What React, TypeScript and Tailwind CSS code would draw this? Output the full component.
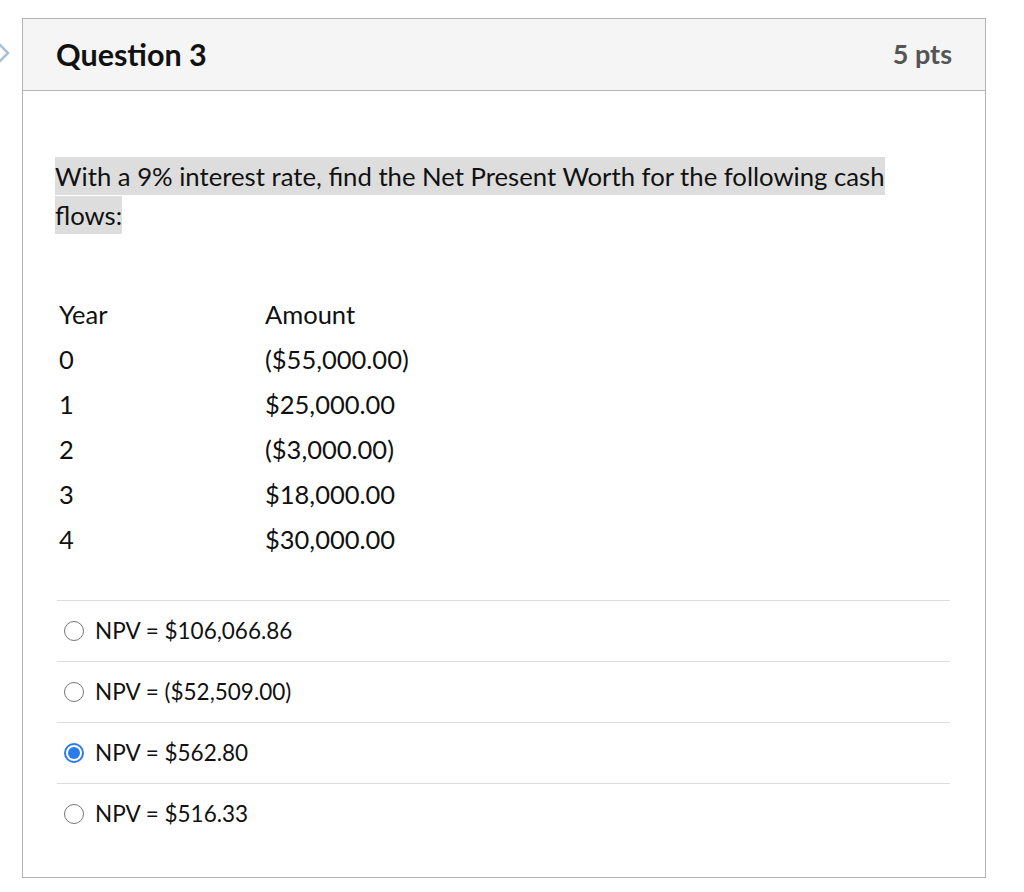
import React from 'react';

const rows = [
  { year: '0', amount: '($55,000.00)' },
  { year: '1', amount: '$25,000.00' },
  { year: '2', amount: '($3,000.00)' },
  { year: '3', amount: '$18,000.00' },
  { year: '4', amount: '$30,000.00' },
];

const answers = [
  { text: 'NPV = $106,066.86', checked: false },
  { text: 'NPV = ($52,509.00)', checked: false },
  { text: 'NPV = $562.80', checked: true },
  { text: 'NPV = $516.33', checked: false },
];

function Radio({ checked }: { checked: boolean }) {
  if (checked) {
    return (
      <span className="flex h-[20px] w-[20px] shrink-0 items-center justify-center rounded-full border-2 border-[#2b7bec] bg-white">
        <span className="h-[12px] w-[12px] rounded-full bg-[#2b7bec]" />
      </span>
    );
  }
  return <span className="h-[20px] w-[20px] shrink-0 rounded-full border border-[#767676] bg-white" />;
}

export default function App() {
  return (
    <div className="relative h-[892px] w-[1024px] bg-white pl-[22px] pt-[18px] font-['Lato',sans-serif] text-[#111]">
      {/* collapsed nav arrow peeking from the left edge */}
      <svg className="absolute left-0 top-[42px]" width="10" height="22" viewBox="0 0 10 22">
        <path d="M-2 1 L8 11 L-2 21" fill="none" stroke="#a8c0d4" strokeWidth="2.5" />
      </svg>

      <div className="h-[860px] w-[964px] border border-[#b5b5b5]">
        {/* Header */}
        <div className="flex h-[72px] items-center justify-between border-b border-[#b5b5b5] bg-[#f5f5f5] pl-[33px] pr-[33px]">
          <h2 className="text-[30.5px] font-bold">Question 3</h2>
          <span className="text-[27px] font-bold text-[#555]">5 pts</span>
        </div>

        {/* Body */}
        <div className="px-[32px] pt-[66px]">
          <p className="w-[860px] text-[25.7px] leading-[38.5px]">
            <span className="bg-[#dddddd] py-[4px]">
              With a 9% interest rate, find the Net Present Worth for the following cash flows:
            </span>
          </p>

          <table className="mt-[58px] text-[25.5px]">
            <thead>
              <tr className="h-[45px]">
                <th className="w-[210px] pl-[4px] text-left font-normal">Year</th>
                <th className="text-left font-normal">Amount</th>
              </tr>
            </thead>
            <tbody>
              {rows.map((r) => (
                <tr key={r.year} className="h-[45px]">
                  <td className="pl-[4px]">{r.year}</td>
                  <td>{r.amount}</td>
                </tr>
              ))}
            </tbody>
          </table>

          <div className="mt-[38px] w-[895px] pl-[2px]">
            {answers.map((a) => (
              <div key={a.text} className="flex h-[61px] items-center gap-[11px] border-t border-[#dcdcdc] pl-[7px]">
                <Radio checked={a.checked} />
                <span className="text-[22.5px]">{a.text}</span>
              </div>
            ))}
          </div>
        </div>
      </div>
    </div>
  );
}
